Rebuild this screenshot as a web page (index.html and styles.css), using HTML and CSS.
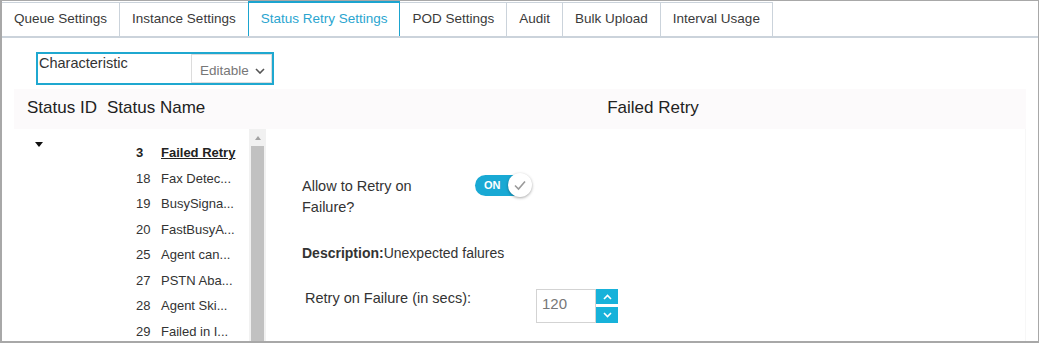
FILE: index.html
```html
<!DOCTYPE html>
<html>
<head>
<meta charset="utf-8">
<title>Status Retry Settings</title>
<link rel="stylesheet" href="styles.css">
</head>
<body>
<div class="frame">
  <ul class="tabs">
    <li class="tab tab-first">Queue Settings</li>
    <li class="tab">Instance Settings</li>
    <li class="tab active">Status Retry Settings</li>
    <li class="tab">POD Settings</li>
    <li class="tab">Audit</li>
    <li class="tab">Bulk Upload</li>
    <li class="tab">Interval Usage</li>
  </ul>
  <div class="content">
    <div class="char-box">
      <span class="char-label">Characteristic</span>
      <div class="select">
        <span class="select-text">Editable</span>
        <svg class="select-chevron" width="10" height="6" viewBox="0 0 10 6"><path d="M1 1 L5 5 L9 1" fill="none" stroke="#555" stroke-width="1.6"/></svg>
      </div>
    </div>
    <div class="table">
      <div class="thead">
        <div class="th-left"><span class="th-id">Status ID</span><span>Status Name</span></div>
        <div class="th-right">Failed Retry</div>
      </div>
      <div class="tbody">
        <div class="list-panel">
          <div class="tree">
            <span class="caret"></span>
            <ul class="items">
              <li class="item selected"><span class="num">3</span><span class="name">Failed Retry</span></li>
              <li class="item"><span class="num">18</span><span class="name">Fax Detec...</span></li>
              <li class="item"><span class="num">19</span><span class="name">BusySigna...</span></li>
              <li class="item"><span class="num">20</span><span class="name">FastBusyA...</span></li>
              <li class="item"><span class="num">25</span><span class="name">Agent can...</span></li>
              <li class="item"><span class="num">27</span><span class="name">PSTN Aba...</span></li>
              <li class="item"><span class="num">28</span><span class="name">Agent Ski...</span></li>
              <li class="item"><span class="num">29</span><span class="name">Failed in I...</span></li>
            </ul>
          </div>
          <div class="scrollbar">
            <span class="arrow-up"></span>
            <div class="thumb"></div>
          </div>
        </div>
        <div class="detail">
          <div class="row-toggle">
            <div class="lbl-allow">Allow to Retry on<br>Failure?</div>
            <div class="toggle">
              <div class="pill">ON</div>
              <div class="knob">
                <svg width="14" height="12" viewBox="0 0 14 12"><path d="M2 6.5 L5.5 10 L12 2.5" fill="none" stroke="#9a9a9a" stroke-width="1.6"/></svg>
              </div>
            </div>
          </div>
          <div class="desc"><b>Description:</b>Unexpected falures</div>
          <div class="row-retry">
            <div class="lbl-retry">Retry on Failure (in secs):</div>
            <div class="num-input">120</div>
            <div class="spinner">
              <div class="spin-btn spin-up"><svg width="9" height="6" viewBox="0 0 9 6"><path d="M1 5 L4.5 1.5 L8 5" fill="none" stroke="#fff" stroke-width="1.6"/></svg></div>
              <div class="spin-btn spin-down"><svg width="9" height="6" viewBox="0 0 9 6"><path d="M1 1 L4.5 4.5 L8 1" fill="none" stroke="#fff" stroke-width="1.6"/></svg></div>
            </div>
          </div>
        </div>
      </div>
    </div>
  </div>
</div>
</body>
</html>
```
FILE: styles.css
```css
* { box-sizing: border-box; }
html, body { margin: 0; padding: 0; background: #fff; }
body {
  font-family: "Liberation Sans", Arial, sans-serif;
  color: #333;
}
.frame {
  width: 1039px;
  height: 343px;
  border: 1px solid #a8a8a8;
  border-left-width: 2px;
  border-bottom-width: 2px;
  display: flex;
  flex-direction: column;
  overflow: hidden;
}
.tabs {
  list-style: none;
  margin: 0;
  padding: 1px 0 0 0;
  height: 37px;
  display: flex;
  border-bottom: 2px solid #cbd3db;
  flex-shrink: 0;
}
.tab {
  height: 34px;
  padding: 0 12px;
  border-top: 1px solid #cbd3db;
  border-right: 1px solid #cbd3db;
  font-size: 13.5px;
  line-height: 31px;
  color: #3a3a3a;
  white-space: nowrap;
}
.tab.active {
  margin-top: -1px;
  height: 35px;
  margin-left: -1px;
  border-top: 2px solid #1ba4cf;
  border-left: 1px solid #1ba4cf;
  border-right: 1px solid #1ba4cf;
  color: #2aa5cf;
}
.content {
  flex: 1;
  display: flex;
  flex-direction: column;
  min-height: 0;
}
.char-box {
  margin: 14px 0 0 34px;
  width: 238px;
  height: 33px;
  border: 2px solid #1fa8d0;
  display: flex;
  justify-content: space-between;
  flex-shrink: 0;
}
.char-label {
  font-size: 14.5px;
  line-height: 18px;
  padding-left: 1px;
  color: #333;
}
.select {
  width: 81px;
  height: 29px;
  border: 1px solid #dcdcdc;
  display: flex;
  align-items: flex-start;
  padding: 6px 0 0 8px;
}
.select-text {
  font-size: 13.5px;
  line-height: 19px;
  color: #777;
}
.select-chevron {
  margin: 7px 6px 0 auto;
}
.table {
  margin: 4px 0 0 12px;
  width: 1012px;
  flex: 1;
  display: flex;
  flex-direction: column;
  min-height: 0;
}
.thead {
  height: 40px;
  background: #fcfafb;
  display: flex;
  align-items: center;
  padding-bottom: 3px;
  font-size: 17px;
  color: #222;
  flex-shrink: 0;
}
.th-left {
  width: 266px;
  padding-left: 13px;
  display: flex;
}
.th-id { width: 80px; }
.th-right {
  flex: 1;
  text-align: center;
}
.tbody {
  flex: 1;
  display: flex;
  min-height: 0;
  border-right: 1px solid #f7f7f7;
}
.list-panel {
  width: 252px;
  display: flex;
}
.tree {
  flex: 1;
  display: flex;
  align-items: flex-start;
  padding-top: 11px;
  padding-left: 21px;
}
.caret {
  width: 0;
  height: 0;
  margin-top: 2px;
  border-left: 4.5px solid transparent;
  border-right: 4.5px solid transparent;
  border-top: 5px solid #111;
}
.items {
  list-style: none;
  margin: 0 0 0 93px;
  padding: 0;
}
.item {
  display: flex;
  height: 25.5px;
  line-height: 25.5px;
  font-size: 13px;
  color: #333;
  white-space: nowrap;
}
.num { width: 25px; }
.item.selected {
  font-weight: bold;
  color: #222;
}
.item.selected .name { text-decoration: underline; }
.scrollbar {
  width: 17px;
  background: #f1f1f1;
  display: flex;
  flex-direction: column;
  align-items: center;
  padding-top: 7px;
}
.arrow-up {
  width: 0;
  height: 0;
  border-left: 3.5px solid transparent;
  border-right: 3.5px solid transparent;
  border-bottom: 4px solid #a3a3a3;
}
.thumb {
  margin-top: 6px;
  width: 13px;
  flex: 1;
  background: #c1c1c1;
}
.detail {
  flex: 1;
  padding: 44px 0 0 36px;
}
.row-toggle {
  display: flex;
  align-items: flex-start;
}
.lbl-allow {
  width: 173px;
  margin-top: 3px;
  font-size: 14.5px;
  line-height: 21px;
  color: #333;
}
.toggle {
  position: relative;
  width: 57px;
  height: 24px;
}
.pill {
  width: 52px;
  height: 21px;
  margin-top: 2px;
  border-radius: 11px;
  background: #19a9d4;
  color: #fff;
  font-size: 11px;
  font-weight: bold;
  line-height: 21px;
  padding-left: 9px;
}
.knob {
  position: absolute;
  top: 0;
  right: 0;
  width: 24px;
  height: 24px;
  border-radius: 50%;
  background: #fff;
  box-shadow: 0 1px 3px rgba(0, 0, 0, 0.35);
  display: flex;
  align-items: center;
  justify-content: center;
}
.desc {
  margin-top: 25px;
  font-size: 14px;
  line-height: 21px;
  color: #333;
}
.desc b { color: #333; }
.row-retry {
  margin-top: 24px;
  display: flex;
  align-items: flex-start;
}
.lbl-retry {
  width: 231px;
  margin-left: 3px;
  font-size: 14.5px;
  line-height: 21px;
  color: #333;
}
.num-input {
  margin-top: 1px;
  width: 60px;
  height: 34px;
  border: 1px solid #d3d3d3;
  font-size: 15px;
  color: #777;
  line-height: 28px;
  padding-left: 5px;
}
.spinner {
  margin-top: 1px;
  width: 22px;
  display: flex;
  flex-direction: column;
  gap: 3px;
}
.spin-btn {
  background: #17b2da;
  display: flex;
  align-items: center;
  justify-content: center;
}
.spin-up { height: 15px; }
.spin-down { height: 16px; }
```
